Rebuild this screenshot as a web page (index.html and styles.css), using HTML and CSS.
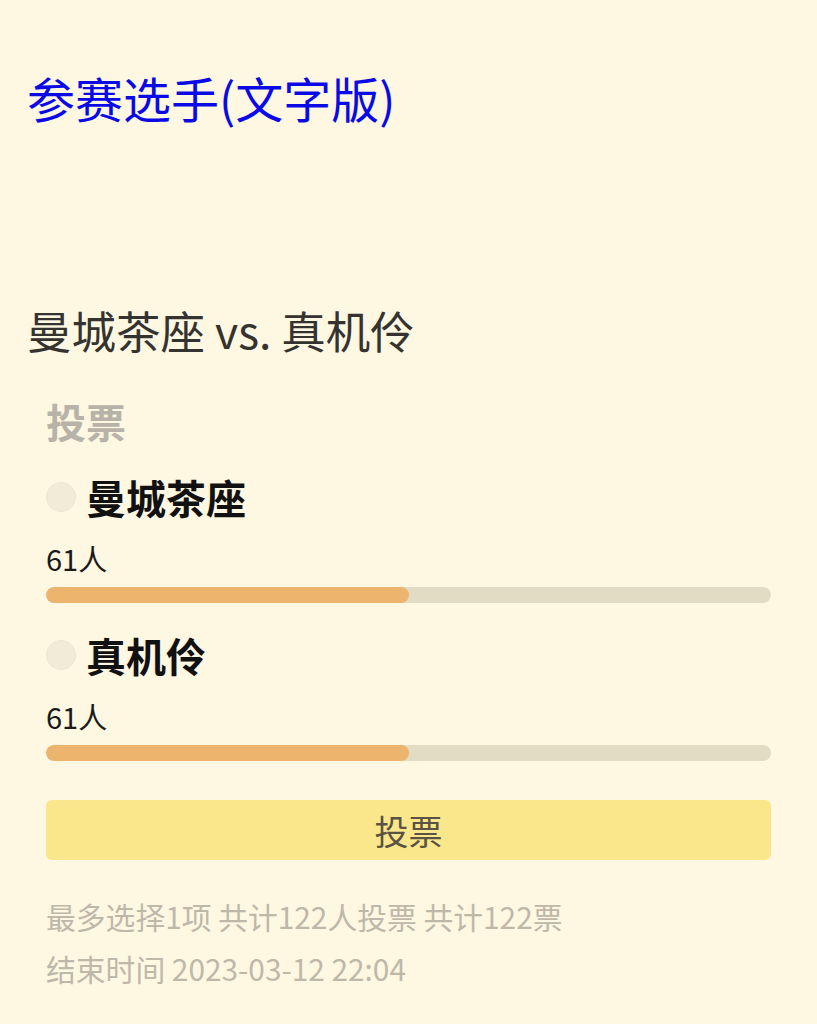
FILE: index.html
```html
<!DOCTYPE html>
<html lang="zh-CN">
<head>
<meta charset="utf-8">
<link rel="stylesheet" href="styles.css">
</head>
<body>
<div class="page">
  <a class="title" href="#">参赛选手(文字版)</a>
  <h2 class="heading">曼城茶座 vs. 真机伶</h2>
  <div class="poll">
    <div class="poll-title">投票</div>
    <div class="option">
      <div class="opt-row"><span class="radio"></span><span class="opt-label">曼城茶座</span></div>
      <div class="count">61人</div>
      <div class="bar"><div class="fill" style="width:50%"></div></div>
    </div>
    <div class="option">
      <div class="opt-row"><span class="radio"></span><span class="opt-label">真机伶</span></div>
      <div class="count">61人</div>
      <div class="bar"><div class="fill" style="width:50%"></div></div>
    </div>
    <button class="vote-btn">投票</button>
    <div class="meta">最多选择1项 共计122人投票 共计122票</div>
    <div class="meta">结束时间 2023-03-12 22:04</div>
  </div>
</div>
</body>
</html>
```
FILE: styles.css
```css
html, body {
  margin: 0;
  padding: 0;
  background: #fef7e2;
}
body {
  font-family: "Noto Sans CJK SC", "Noto Sans", sans-serif;
}
.page {
  padding: 67px 46px 0 27px;
  display: flex;
  flex-direction: column;
}
.title {
  display: block;
  font-size: 48px;
  line-height: 60px;
  color: #0a0ae6;
  text-decoration: none;
  align-self: flex-start;
}
.heading {
  margin: 173px 0 0;
  font-size: 44.5px;
  line-height: 60px;
  font-weight: 400;
  color: #353330;
}
.poll {
  padding-left: 19px;
  margin-top: 36px;
  display: flex;
  flex-direction: column;
}
.poll-title {
  font-size: 40px;
  line-height: 50px;
  font-weight: 700;
  color: #b8b3a8;
}
.option {
  margin-top: 26px;
}
.option + .option {
  margin-top: 27px;
}
.opt-row {
  display: flex;
  align-items: center;
  height: 50px;
  gap: 10px;
}
.radio {
  width: 28px;
  height: 28px;
  border-radius: 50%;
  background: #f1ecd8;
  border: 1px solid #ebe6d2;
  flex: none;
}
.opt-label {
  font-size: 40px;
  font-weight: 700;
  color: #111;
  line-height: 50px;
}
.count {
  margin-top: 16px;
  font-size: 29px;
  line-height: 40px;
  color: #1a1a1a;
}
.bar {
  margin-top: 9px;
  height: 16px;
  border-radius: 8px;
  background: #e3dcc5;
  overflow: hidden;
}
.fill {
  height: 100%;
  border-radius: 8px;
  background: #edb46e;
}
.vote-btn {
  margin-top: 39px;
  height: 60px;
  border: none;
  border-radius: 6px;
  background: #fae78b;
  font-family: inherit;
  font-size: 34px;
  color: #5a5242;
  padding: 0;
}
.meta {
  font-size: 29.8px;
  line-height: 52px;
  color: #beb8a9;
}
.vote-btn + .meta {
  margin-top: 30px;
}
```
